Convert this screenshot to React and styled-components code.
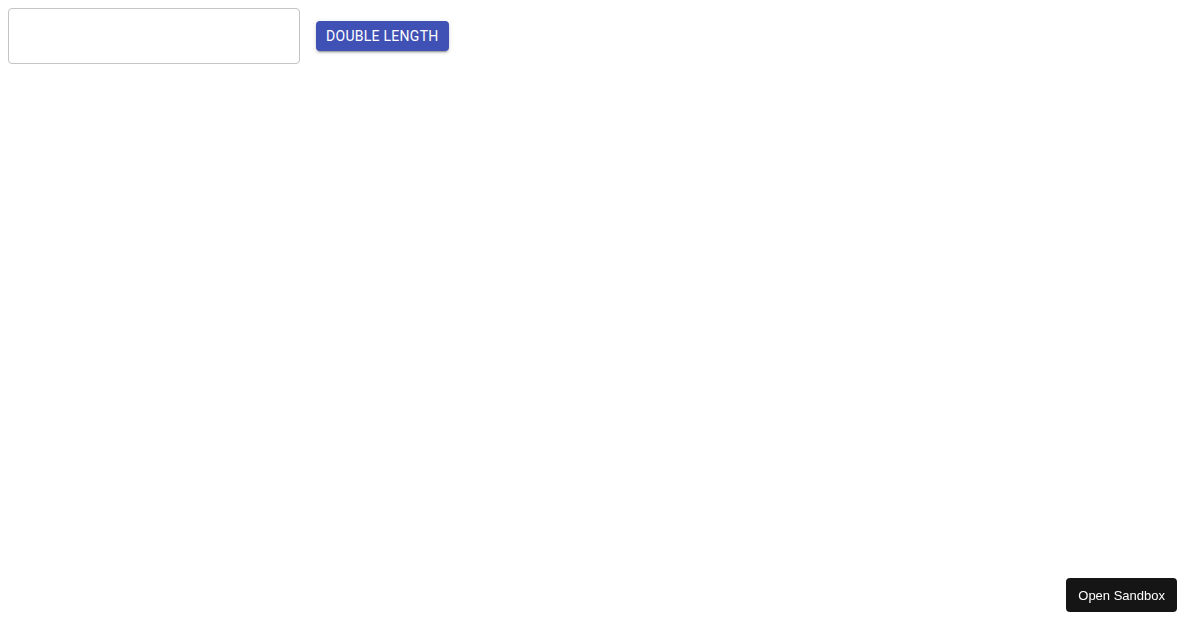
import React, { useState } from 'react';
import styled, { createGlobalStyle } from 'styled-components';

const GlobalStyle = createGlobalStyle`
  * {
    box-sizing: border-box;
  }

  body {
    margin: 0;
    background: #ffffff;
    font-family: Roboto, 'Helvetica', Arial, sans-serif;
  }
`;

const Form = styled.div`
  display: flex;
  align-items: center;
  gap: 16px;
  padding: 8px;
`;

const Field = styled.input`
  width: 292px;
  height: 56px;
  padding: 16.5px 14px;
  border: 1px solid #c4c4c4;
  border-radius: 4px;
  font-family: Roboto, sans-serif;
  font-size: 16px;
  color: rgba(0, 0, 0, 0.87);
  outline: none;

  &:hover {
    border-color: rgba(0, 0, 0, 0.87);
  }

  &:focus {
    border: 2px solid #3f51b5;
    padding: 15.5px 13px;
  }
`;

const Button = styled.button`
  height: 30px;
  padding: 4px 10px;
  border: none;
  border-radius: 4px;
  background: #3f51b5;
  color: #ffffff;
  font-family: Roboto, sans-serif;
  font-size: 14px;
  font-weight: 400;
  letter-spacing: 0.02em;
  text-transform: uppercase;
  cursor: pointer;
  box-shadow: 0px 3px 1px -2px rgba(0, 0, 0, 0.2), 0px 2px 2px 0px rgba(0, 0, 0, 0.14),
    0px 1px 5px 0px rgba(0, 0, 0, 0.12);

  &:hover {
    background: #303f9f;
  }
`;

const SandboxLink = styled.a`
  position: fixed;
  right: 23px;
  bottom: 18px;
  display: flex;
  align-items: center;
  height: 34px;
  padding: 0 12px;
  border-radius: 4px;
  background: #151515;
  color: #ffffff;
  font-family: 'Liberation Sans', Arial, sans-serif;
  font-size: 13px;
  text-decoration: none;
  box-shadow: 0 0 0 1px rgba(255, 255, 255, 0.05);
`;

export default function App() {
  const [value, setValue] = useState('');

  const doubleLength = () => {
    setValue(prev => prev + prev);
  };

  return (
    <>
      <GlobalStyle />
      <Form>
        <Field value={value} onChange={e => setValue(e.target.value)} />
        <Button onClick={doubleLength}>Double length</Button>
      </Form>
      <SandboxLink href="#">Open Sandbox</SandboxLink>
    </>
  );
}
